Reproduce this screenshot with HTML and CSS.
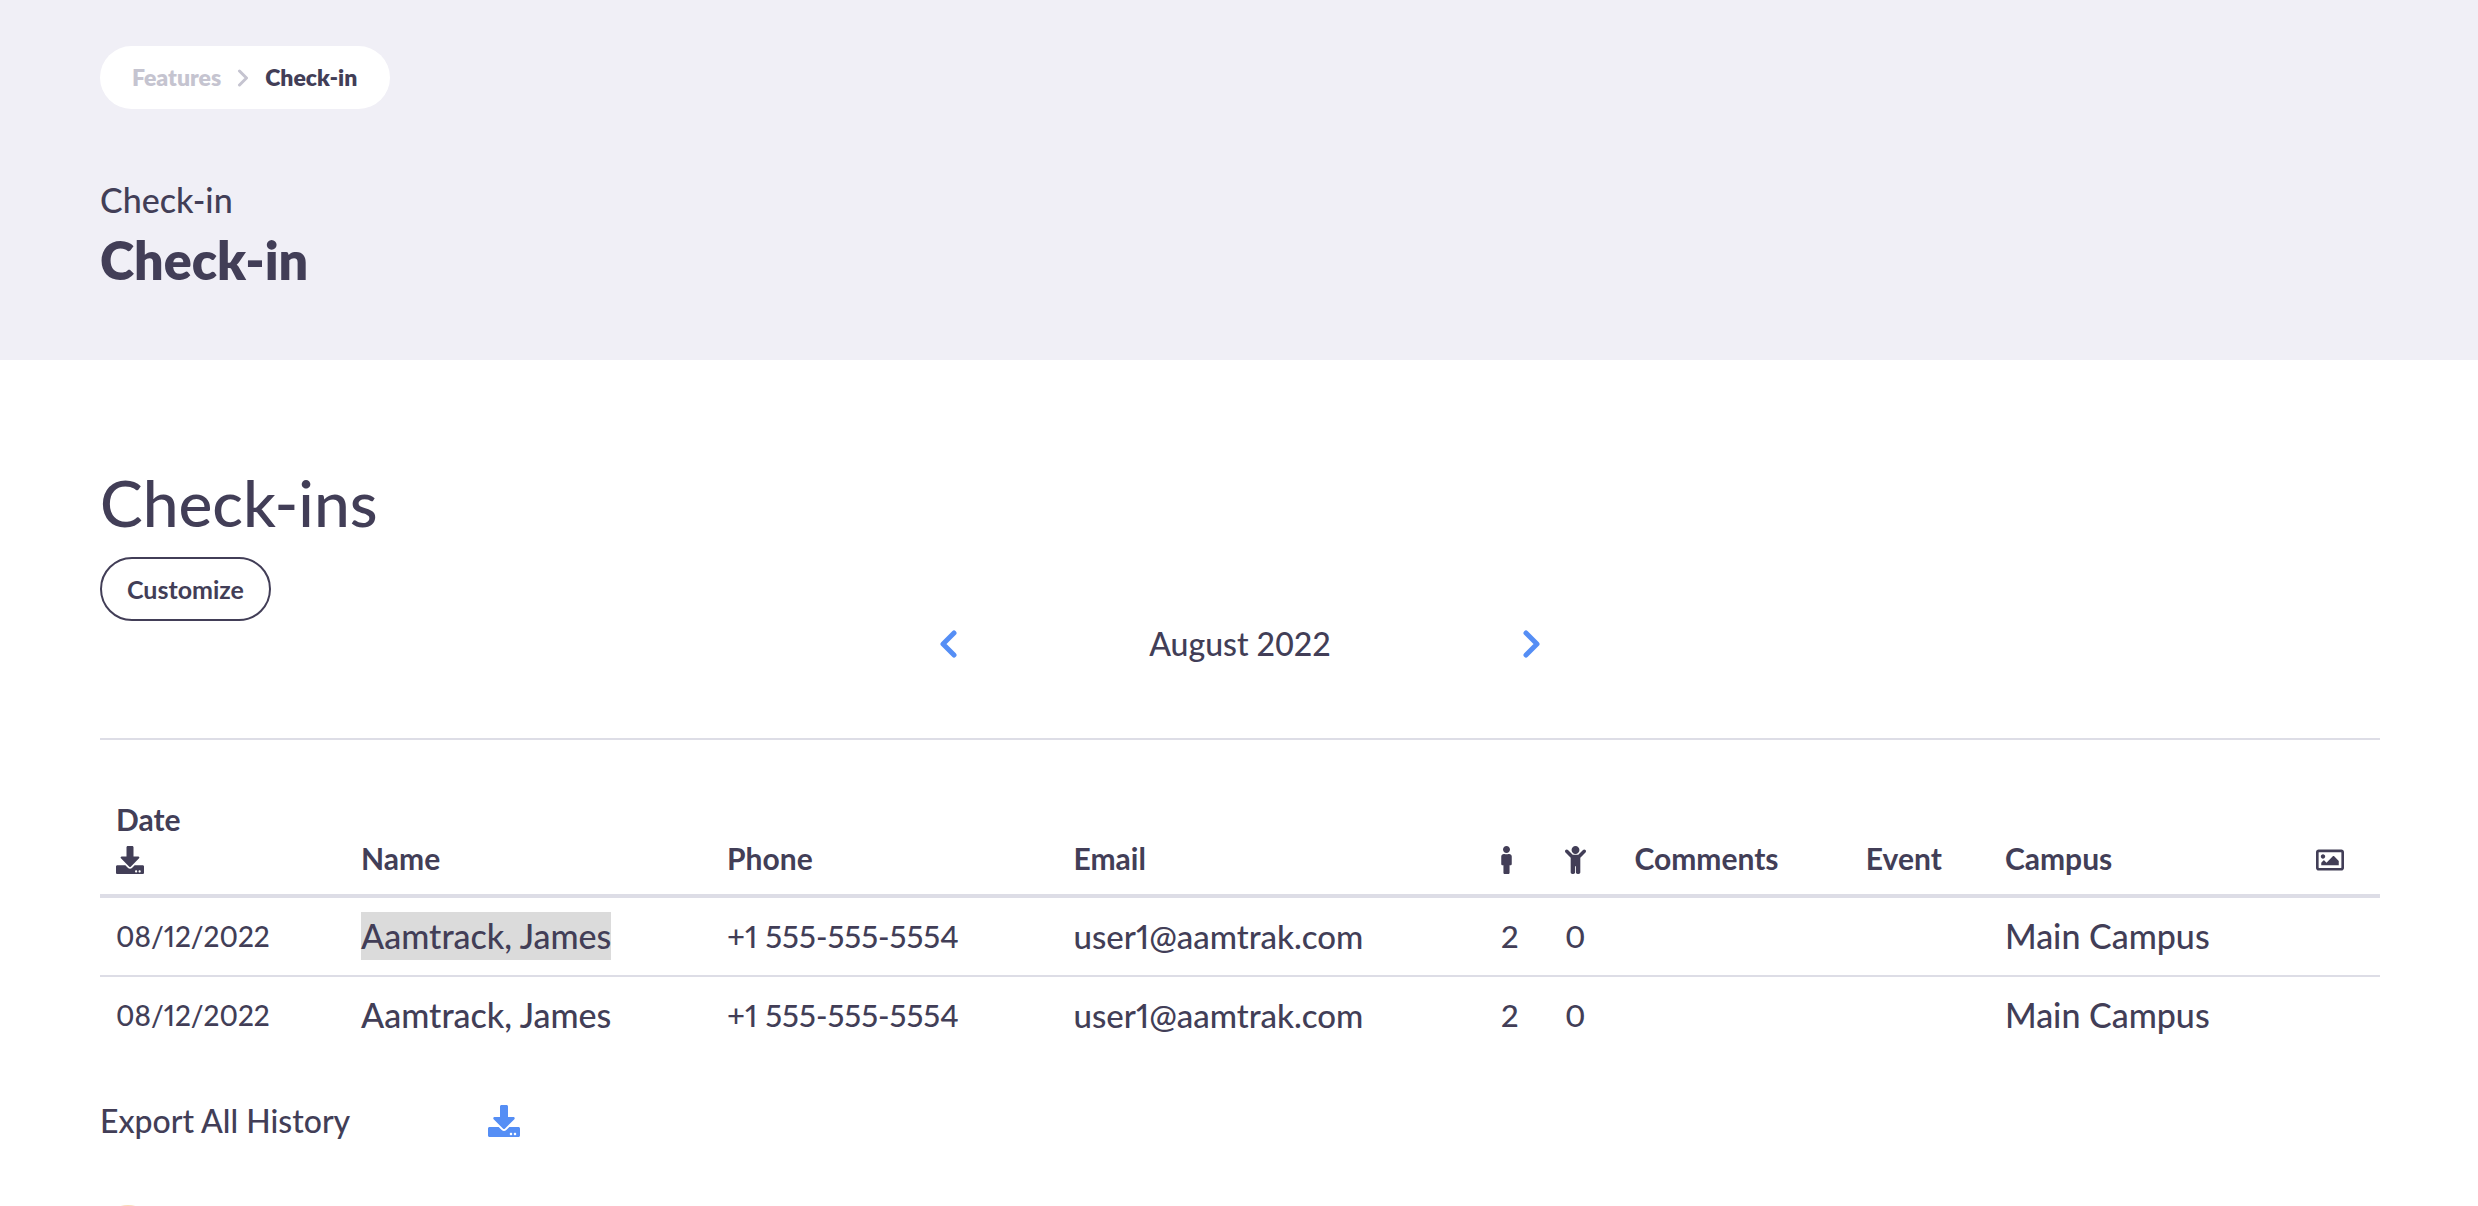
FILE: index.html
```html
<!DOCTYPE html>
<html lang="en">
<head>
<meta charset="utf-8">
<meta name="viewport" content="width=device-width, initial-scale=1">
<title>Check-in</title>
<link rel="stylesheet" href="styles.css">
</head>
<body>
<svg class="sprite" aria-hidden="true">
  <symbol id="download" viewBox="0 0 512 512"><path d="M216 0h80c13.300 0 24 10.700 24 24v168h87.700c17.800 0 26.700 21.500 14.100 34.100L269.700 378.300c-7.500 7.500-19.800 7.500-27.300 0L90.100 226.100c-12.600-12.600-3.700-34.100 14.100-34.100H192V24c0-13.300 10.700-24 24-24zm296 376v112c0 13.300-10.700 24-24 24H24c-13.300 0-24-10.700-24-24V376c0-13.300 10.700-24 24-24h146.700l49 49c20.100 20.100 52.500 20.100 72.600 0l49-49H488c13.300 0 24 10.700 24 24zm-124 88c0-11-9-20-20-20s-20 9-20 20 9 20 20 20 20-9 20-20zm64 0c0-11-9-20-20-20s-20 9-20 20 9 20 20 20 20-9 20-20z"/></symbol>
</svg>

<header class="page-header">
  <nav class="breadcrumb" aria-label="Breadcrumb">
    <a class="crumb" href="#features">Features</a>
    <svg class="crumb-arrow" viewBox="0 0 12 18" aria-hidden="true"><path d="M2.500 2l7 7-7 7"/></svg>
    <span class="crumb current" aria-current="page">Check-in</span>
  </nav>
  <p class="pretitle">Check-in</p>
  <h1 class="title">Check-in</h1>
</header>

<main class="content">
  <h2 class="section-title">Check-ins</h2>
  <button class="customize" type="button">Customize</button>

  <nav class="month-nav" aria-label="Month">
    <a class="month-link" href="#previous" aria-label="Previous month"><svg class="month-arrow" viewBox="0 0 18 28" aria-hidden="true"><path d="M14 3L3 14l11 11"/></svg></a>
    <span>August 2022</span>
    <a class="month-link" href="#next" aria-label="Next month"><svg class="month-arrow" viewBox="0 0 18 28" aria-hidden="true"><path d="M4 3l11 11L4 25"/></svg></a>
  </nav>

  <hr class="divider">

  <table class="checkins">
    <colgroup>
      <col class="col-date"><col class="col-name"><col class="col-phone"><col class="col-email"><col class="col-adults"><col class="col-children"><col class="col-comments"><col class="col-event"><col class="col-campus"><col class="col-photo">
    </colgroup>
    <thead>
      <tr>
        <th scope="col">Date<br><svg class="icon" viewBox="0 0 512 512" role="img" aria-label="Download"><use href="#download"/></svg></th>
        <th scope="col">Name</th>
        <th scope="col">Phone</th>
        <th scope="col">Email</th>
        <th scope="col"><svg class="icon icon-adult" viewBox="0 0 192 512" role="img" aria-label="Adults"><path d="M96 0c35.346 0 64 28.654 64 64s-28.654 64-64 64-64-28.654-64-64S60.654 0 96 0m48 144h-11.360c-22.711 10.443-49.590 10.894-73.280 0H48c-26.510 0-48 21.490-48 48v136c0 13.255 10.745 24 24 24h16v136c0 13.255 10.745 24 24 24h64c13.255 0 24-10.745 24-24V352h16c13.255 0 24-10.745 24-24V192c0-26.510-21.490-48-48-48z"/></svg></th>
        <th scope="col"><svg class="icon icon-child" viewBox="0 0 384 512" role="img" aria-label="Children"><path d="M120 72c0-39.765 32.235-72 72-72s72 32.235 72 72c0 39.764-32.235 72-72 72s-72-32.236-72-72zm254.627 1.373c-12.496-12.497-32.758-12.497-45.254 0L242.745 160H141.254L54.627 73.373c-12.496-12.497-32.758-12.497-45.254 0-12.497 12.497-12.497 32.758 0 45.255L104 213.254V480c0 17.673 14.327 32 32 32h16c17.673 0 32-14.327 32-32V368h16v112c0 17.673 14.327 32 32 32h16c17.673 0 32-14.327 32-32V213.254l94.627-94.627c12.497-12.496 12.497-32.757 0-45.254z"/></svg></th>
        <th scope="col">Comments</th>
        <th scope="col">Event</th>
        <th scope="col">Campus</th>
        <th scope="col"><svg class="icon" viewBox="0 0 512 512" role="img" aria-label="Photo"><path d="M464 64H48C21.490 64 0 85.490 0 112v288c0 26.510 21.490 48 48 48h416c26.510 0 48-21.490 48-48V112c0-26.510-21.490-48-48-48zm-6 336H54a6 6 0 0 1-6-6V118a6 6 0 0 1 6-6h404a6 6 0 0 1 6 6v276a6 6 0 0 1-6 6zM128 152c-22.091 0-40 17.909-40 40s17.909 40 40 40 40-17.909 40-40-17.909-40-40-40zM96 352h320v-80l-87.515-87.515c-4.686-4.686-12.284-4.686-16.971 0L192 304l-39.515-39.515c-4.686-4.686-12.284-4.686-16.971 0L96 304v48z"/></svg></th>
      </tr>
    </thead>
    <tbody>
      <tr>
        <td class="date">08/12/2022</td>
        <td><span class="selected">Aamtrack, James</span></td>
        <td class="number">+1 555-555-5554</td>
        <td class="email">user1@aamtrak.com</td>
        <td class="number">2</td>
        <td class="number">0</td>
        <td></td>
        <td></td>
        <td>Main Campus</td>
        <td></td>
      </tr>
      <tr>
        <td class="date">08/12/2022</td>
        <td>Aamtrack, James</td>
        <td class="number">+1 555-555-5554</td>
        <td class="email">user1@aamtrak.com</td>
        <td class="number">2</td>
        <td class="number">0</td>
        <td></td>
        <td></td>
        <td>Main Campus</td>
        <td></td>
      </tr>
    </tbody>
  </table>

  <div class="export">
    <span>Export All History</span>
    <a class="export-link" href="#export" aria-label="Download all history"><svg class="export-icon" viewBox="0 0 512 512" aria-hidden="true"><use href="#download"/></svg></a>
  </div>

  <div class="badge"></div>
</main>
</body>
</html>
```
FILE: styles.css
```css
:root {
  --ink: #423e57;
  --line: #dddde6;
  --blue: #558ef5;
}

* { box-sizing: border-box; }

html,
body {
  height: 100%;
  overflow: hidden;
}

body {
  margin: 0;
  background: #fff;
  color: var(--ink);
  font-family: Lato, "Open Sans", sans-serif;
  font-size: 32px;
  font-weight: 500;
  line-height: 48px;
}

.sprite { position: absolute; width: 0; height: 0; }

.page-header {
  padding: 46px 98px 70px 100px;
  background: #f0eff6;
}

.breadcrumb {
  display: inline-flex;
  align-items: center;
  gap: 16px;
  padding: 16px 33px 16px 32px;
  border-radius: 32px;
  background: #fff;
  font-size: 23px;
  font-weight: 800;
  line-height: 31px;
  vertical-align: top;
}

.crumb { color: #c5c4d0; text-decoration: none; }
.current { color: var(--ink); }

.crumb-arrow { width: 12px; height: 18px; }

.crumb-arrow path,
.month-arrow path {
  fill: none;
  stroke: #c5c4d0;
  stroke-width: 3;
  stroke-linecap: round;
  stroke-linejoin: round;
}

.pretitle {
  margin: 67px 0 6px;
  font-size: 34px;
}

.title {
  margin: 0;
  font-size: 52px;
  font-weight: 800;
  line-height: 60px;
}

.content { padding: 107px 98px 0 100px; }

.section-title {
  margin: 0 0 18px;
  font-size: 64px;
  font-weight: 500;
  line-height: 72px;
}

.customize {
  display: block;
  height: 64px;
  padding: 0 25px;
  border: 2px solid var(--ink);
  border-radius: 32px;
  background: #fff;
  color: var(--ink);
  font: 700 25px Lato, "Open Sans", sans-serif;
}

.month-nav {
  display: flex;
  align-items: center;
  justify-content: space-between;
  max-width: 600px;
  margin: 0 auto;
  line-height: 46px;
}

.month-link,
.export-link { display: flex; color: var(--blue); }

.month-arrow { width: 18px; height: 28px; }
.month-arrow path { stroke: var(--blue); stroke-width: 5; }

.divider {
  margin: 71px 0 44px;
  border: 0;
  border-top: 2px solid var(--line);
}

.checkins {
  width: 100%;
  border-spacing: 0;
  table-layout: fixed;
}

.col-date { width: 10.75%; }
.col-name { width: 16.05%; }
.col-phone { width: 15.2%; }
.col-email { width: 18.75%; }
.col-adults { width: 2.8%; }
.col-children { width: 3.05%; }
.col-comments { width: 10.15%; }
.col-event { width: 6.1%; }
.col-campus { width: 13.65%; }
.col-photo { width: 3.5%; }

.checkins th {
  padding: 16px;
  border-bottom: 4px solid var(--line);
  font-size: 30px;
  font-weight: 700;
  line-height: 39px;
  text-align: left;
  vertical-align: bottom;
}

.checkins td {
  height: 77px;
  padding: 14px 16px 15px;
  font-size: 34px;
  font-variant-numeric: proportional-nums;
  white-space: nowrap;
}

.checkins tr + tr td { border-top: 2px solid var(--line); height: 79px; }
.checkins td.date { font-size: 28px; }
.checkins td.number { font-size: 31px; }
.checkins td.email { font-size: 33px; }

.selected { display: inline-block; background: #dbdbdb; vertical-align: top; }

.icon {
  width: 28px;
  height: 28px;
  fill: currentColor;
  vertical-align: -4px;
}

.icon-adult { width: 11px; }
.icon-child { width: 21px; }

.export {
  display: grid;
  grid-template-columns: 388px 1fr;
  align-items: center;
  margin-top: 43px;
}

.export-icon { width: 32px; height: 32px; fill: currentColor; }

.badge {
  width: 56px;
  height: 56px;
  margin-top: 60px;
  border-radius: 50%;
  background: #f9dcb8;
}
```
